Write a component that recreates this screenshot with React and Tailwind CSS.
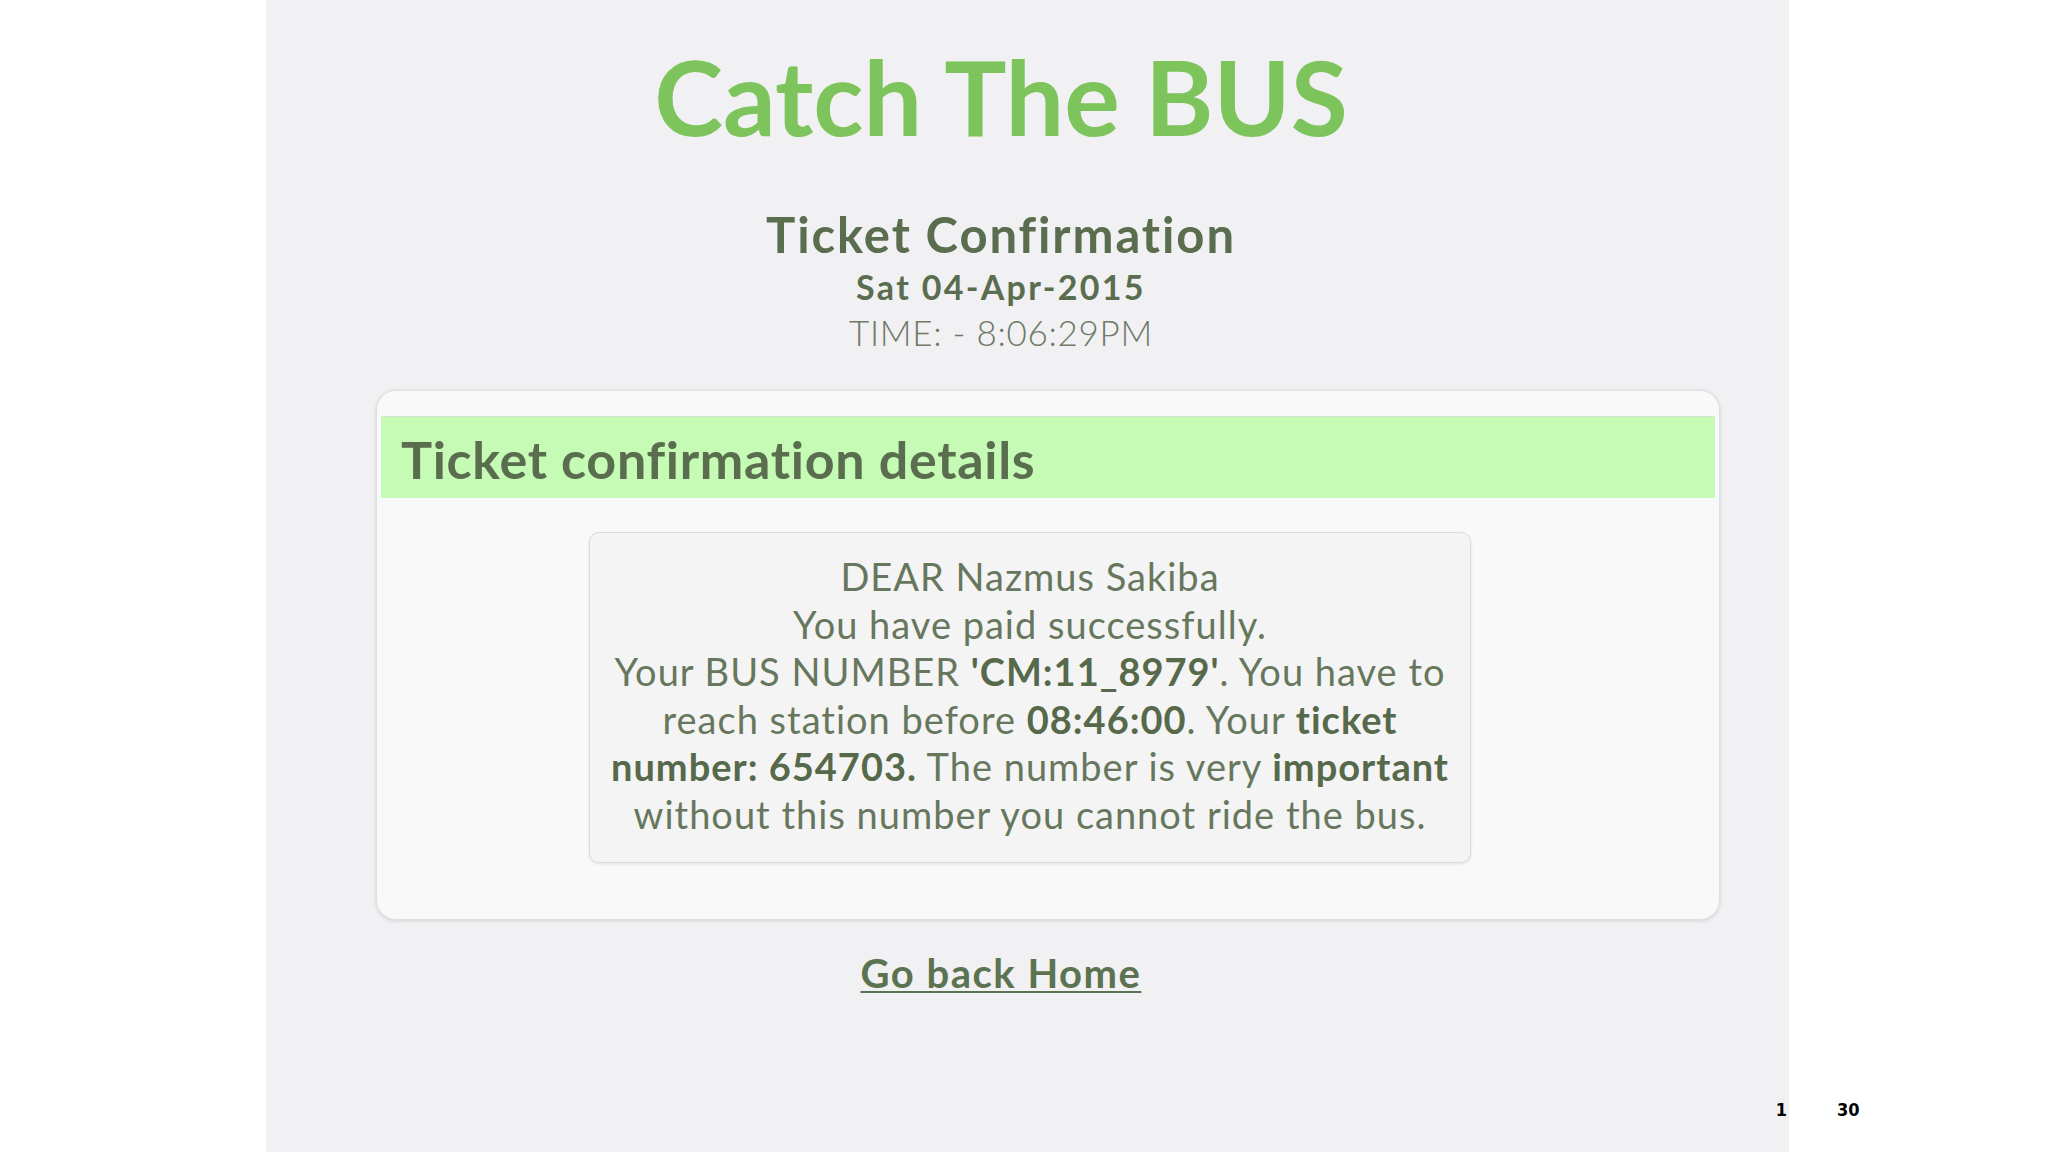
import React from 'react';

const ticket = {
  name: 'Nazmus Sakiba',
  date: 'Sat 04-Apr-2015',
  time: '8:06:29PM',
  bus: "'CM:11_8979'",
  reachBy: '08:46:00',
  number: '654703',
};

const TicketMessage = ({ t }) => (
  <div className="ml-[208px] mt-[34px] w-[882px] rounded-[10px] border border-[#dcdcdc] bg-[#f4f4f4] pb-[23px] pt-[20px] text-center text-[38px] leading-[47.6px] tracking-[1px] text-[#67775d] shadow-[0_1px_3px_rgba(0,0,0,0.1)]">
    <p className="whitespace-nowrap">DEAR {t.name}</p>
    <p className="whitespace-nowrap">You have paid successfully.</p>
    <p className="whitespace-nowrap">
      Your BUS NUMBER <b className="font-bold text-[#57694b]">{t.bus}</b>. You have to
    </p>
    <p className="whitespace-nowrap">
      reach station before <b className="font-bold text-[#57694b]">{t.reachBy}</b>. Your{' '}
      <b className="font-bold text-[#57694b]">ticket</b>
    </p>
    <p className="whitespace-nowrap">
      <b className="font-bold text-[#57694b]">number: {t.number}.</b> The number is very{' '}
      <b className="font-bold text-[#57694b]">important</b>
    </p>
    <p className="whitespace-nowrap">without this number you cannot ride the bus.</p>
  </div>
);

const App = () => {
  return (
    <div className="flex h-[1152px] w-[2048px] bg-white font-[Lato,sans-serif]">
      <div className="w-[266px] shrink-0" />

      <div className="flex h-full w-[1523px] shrink-0 flex-col bg-[#f1f0f2]">
        <div className="w-[1470px] text-center">
          <h1 className="pt-[44px] text-[104px] font-bold leading-none text-[#7dc45c]">Catch The BUS</h1>
          <h2 className="mt-[62px] text-[49px] font-bold leading-none tracking-[1.9px] text-[#5a6d4f]">
            Ticket Confirmation
          </h2>
          <p className="mt-[11px] text-[34px] font-bold leading-none tracking-[2.3px] text-[#5a6d4f]">{ticket.date}</p>
          <p className="mt-[11px] text-[35px] font-light leading-none tracking-[0.7px] text-[#6c7a66]">
            TIME: - {ticket.time}
          </p>
        </div>

        {/* confirmation card */}
        <div className="ml-[110px] mt-[40px] w-[1344px] rounded-[20px] border border-[#e0e0e2] bg-[#f9f9fa] px-[4px] pb-[56px] pt-[25px] shadow-[0_1px_4px_rgba(0,0,0,0.12)]">
          <div className="border-t border-[#d5e3cf] bg-[#c5fbb5] pb-[13px] pl-[20px] pt-[16px]">
            <h3 className="text-[52px] font-bold leading-none tracking-[0.7px] text-[#5a6d4f]">
              Ticket confirmation details
            </h3>
          </div>
          <TicketMessage t={ticket} />
        </div>

        <div className="mt-[33px] w-[1470px] text-center">
          <a
            href="#"
            className="text-[40px] font-bold leading-none tracking-[1.5px] text-[#5b7350] underline decoration-2 underline-offset-[3px]"
          >
            Go back Home
          </a>
        </div>

        <div className="mt-auto flex justify-end pb-[29px] pr-[2px] font-['DejaVu_Sans_Condensed',sans-serif] text-[18px] font-bold text-black">
          1
        </div>
      </div>

      <div className="flex flex-1 flex-col justify-end pb-[29px] pl-[48px] font-['DejaVu_Sans_Condensed',sans-serif] text-[18px] font-bold text-black">
        30
      </div>
    </div>
  );
};

export default App;
